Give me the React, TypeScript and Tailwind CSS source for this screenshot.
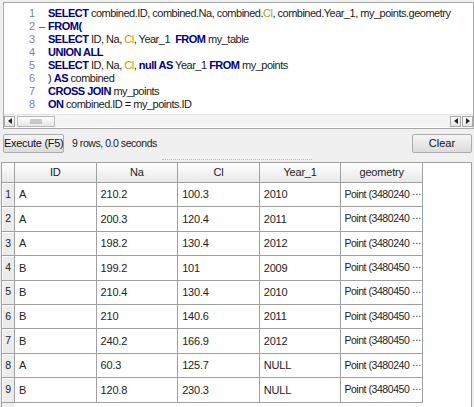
import React from "react";

const KW = "font-bold text-[#000080]";
const YL = "text-[#b8a400]";

type Seg = [string, string?];

const lines: { fold?: boolean; segs: Seg[] }[] = [
  { segs: [["SELECT", KW], [" combined.ID, combined.Na, combined."], ["Cl", YL], [", combined.Year_1, my_points.geometry"]] },
  { fold: true, segs: [["FROM(", KW]] },
  { segs: [["SELECT", KW], [" ID, Na, "], ["Cl", YL], [", Year_1  "], ["FROM", KW], [" my_table"]] },
  { segs: [["UNION ALL", KW]] },
  { segs: [["SELECT", KW], [" ID, Na, "], ["Cl", YL], [", "], ["null AS", KW], [" Year_1 "], ["FROM", KW], [" my_points"]] },
  { segs: [[") "], ["AS", KW], [" combined"]] },
  { segs: [["CROSS JOIN", KW], [" my_points"]] },
  { segs: [["ON", KW], [" combined.ID = my_points.ID"]] },
];

const rows = [
  ["A", "210.2", "100.3", "2010", "3480240"],
  ["A", "200.3", "120.4", "2011", "3480240"],
  ["A", "198.2", "130.4", "2012", "3480240"],
  ["B", "199.2", "101", "2009", "3480450"],
  ["B", "210.4", "130.4", "2010", "3480450"],
  ["B", "210", "140.6", "2011", "3480450"],
  ["B", "240.2", "166.9", "2012", "3480450"],
  ["A", "60.3", "125.7", "NULL", "3480240"],
  ["B", "120.8", "230.3", "NULL", "3480450"],
];

const headers = ["ID", "Na", "Cl", "Year_1", "geometry"];

function ArrowBtn({ dir }: { dir: "l" | "r" }) {
  return (
    <div className="w-[11px] h-[11px] border border-[#a9a9a9] bg-gradient-to-b from-white to-[#e2e2e2] flex items-center justify-center">
      <svg width="4" height="6" viewBox="0 0 4 6">
        {dir === "l" ? <path d="M4 0 L0 3 L4 6 Z" fill="#222" /> : <path d="M0 0 L4 3 L0 6 Z" fill="#222" />}
      </svg>
    </div>
  );
}

export default function App() {
  return (
    <div
      className="w-[474px] h-[407px] bg-[#f0f0f0] overflow-hidden flex flex-col text-[#222]"
      style={{ fontFamily: '"Liberation Sans", "Noto Sans CJK JP", sans-serif' }}
    >
      {/* editor */}
      <div className="mt-[2px] ml-[3px] h-[127px] border border-[#a8a8a8] bg-white flex flex-col overflow-hidden">
        <div className="flex-1 pt-[4px] text-[11px] leading-[13px] tracking-[-0.5px]">
          {lines.map((l, i) => (
            <div key={i} className="flex h-[13px] whitespace-pre">
              <div className="w-[31px] shrink-0 text-right text-[#7386ad] font-normal tracking-normal">{i + 1}</div>
              <div className="w-[13px] shrink-0 pl-[4px] text-[#444]">{l.fold ? "–" : ""}</div>
              <div>
                {l.segs.map((s, j) => (
                  <span key={j} className={s[1] ?? "text-[#1a1a1a]"}>
                    {s[0]}
                  </span>
                ))}
              </div>
            </div>
          ))}
        </div>
        <div className="h-[13px] mb-[1px] flex items-center bg-[#f4f4f4] border-t border-[#e2e2e2]">
          <ArrowBtn dir="l" />
          <div className="ml-[2px] w-[38px] h-[11px] border border-[#b8b8b8] bg-gradient-to-b from-white to-[#e6e6e6] flex items-center justify-center">
            <div className="w-[12px] h-[5px] bg-[radial-gradient(#9a9a9a_0.6px,transparent_0.8px)] bg-[length:2px_2px]" />
          </div>
          <div className="flex-1" />
          <ArrowBtn dir="l" />
          <div className="ml-[1px]">
            <ArrowBtn dir="r" />
          </div>
        </div>
      </div>

      {/* toolbar */}
      <div className="h-[27px] flex items-center mt-[1px]">
        <button className="ml-[3px] w-[61px] h-[19px] border border-[#acacac] rounded-[2px] bg-gradient-to-b from-[#f6f6f6] to-[#dcdcdc] text-[11px] tracking-[-0.3px] leading-none text-[#111] whitespace-nowrap">
          Execute (F5)
        </button>
        <span className="ml-[8px] text-[10.5px] text-[#222] tracking-[-0.45px]">9 rows, 0.0 seconds</span>
        <div className="flex-1" />
        <button className="mr-[2px] w-[60px] h-[19px] border border-[#acacac] rounded-[2px] bg-gradient-to-b from-[#f6f6f6] to-[#dcdcdc] text-[11px] leading-none text-[#111]">
          Clear
        </button>
      </div>

      {/* splitter */}
      <div className="h-[5px] flex justify-center items-center">
        <div className="w-[150px] h-[1px] border-t border-dotted border-[#b8b8b8]" />
      </div>

      {/* grid */}
      <div className="ml-[1px] mr-[2px] flex-1 border-l border-t border-r border-[#a0a0a0] bg-white text-[11px] tracking-[-0.2px] relative">
        <div className="absolute left-0 top-0 bottom-0 w-[13px] bg-[#f0f0f0]" />
        <div className="relative">
          <div className="flex h-[20px]">
            <div className="w-[13px] shrink-0 border-r border-b border-[#a0a0a0] bg-gradient-to-b from-white to-[#e8e8e8]" />
            {headers.map((h) => (
              <div
                key={h}
                className="w-[81.6px] shrink-0 border-r border-b border-[#a0a0a0] bg-gradient-to-b from-white to-[#e8e8e8] flex items-center justify-center"
              >
                {h}
              </div>
            ))}
          </div>
          {rows.map((r, i) => (
            <div key={i} className="flex h-[24.4px]">
              <div className="w-[13px] shrink-0 border-r border-b border-[#a0a0a0] bg-[#ececec] flex items-center justify-center text-[10.5px] shadow-[inset_1px_1px_0_#fff]">
                {i + 1}
              </div>
              {r.slice(0, 4).map((c, j) => (
                <div key={j} className="w-[81.6px] shrink-0 border-r border-b border-[#a0a0a0] flex items-center pl-[4px] bg-white">
                  {c}
                </div>
              ))}
              <div className="w-[81.6px] shrink-0 border-r border-b border-[#a0a0a0] flex items-center pl-[3px] bg-white whitespace-nowrap text-[10.5px] tracking-[-0.45px]">
                Point ({r[4]}
                <span className="ml-[3px] text-[9px] tracking-normal" style={{ fontFamily: '"DejaVu Sans", sans-serif' }}>
                  ⋯
                </span>
              </div>
            </div>
          ))}
        </div>
      </div>
    </div>
  );
}
